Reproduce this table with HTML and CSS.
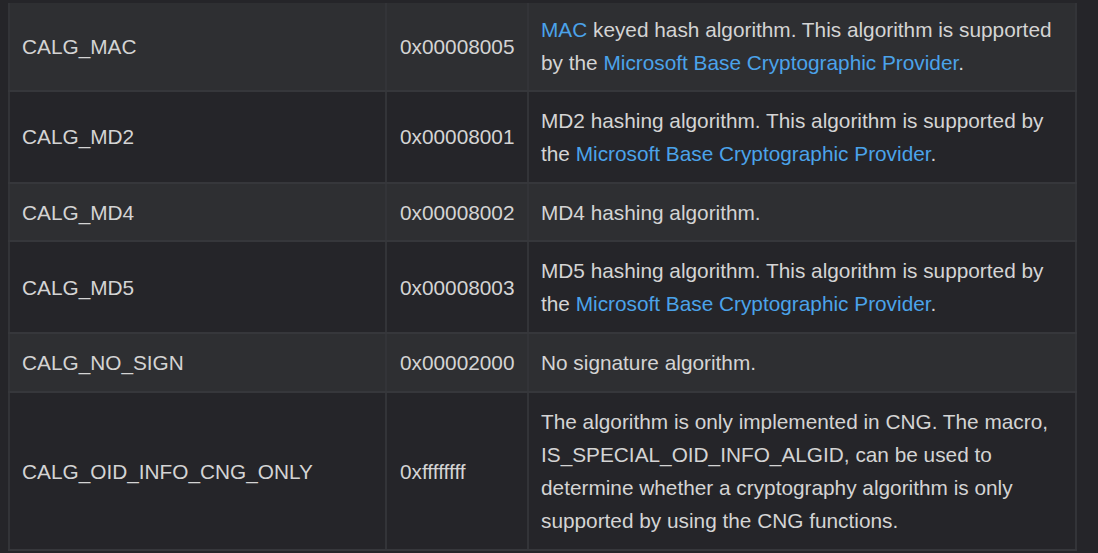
FILE: index.html
```html
<!DOCTYPE html>
<html lang="en">
<head>
<meta charset="utf-8">
<title>ALG_ID</title>
<link rel="stylesheet" href="styles.css">
</head>
<body>
<div class="wrap">
<table class="alg-table">
  <colgroup>
    <col class="c-name">
    <col class="c-value">
    <col class="c-desc">
  </colgroup>
  <tbody>
    <tr class="odd first">
      <td>CALG_MAC</td>
      <td class="val">0x00008005</td>
      <td><a href="#">MAC</a> keyed hash algorithm. This algorithm is supported by the <a href="#">Microsoft Base Cryptographic Provider</a>.</td>
    </tr>
    <tr class="even">
      <td>CALG_MD2</td>
      <td class="val">0x00008001</td>
      <td>MD2 hashing algorithm. This algorithm is supported by the <a href="#">Microsoft Base Cryptographic Provider</a>.</td>
    </tr>
    <tr class="odd">
      <td>CALG_MD4</td>
      <td class="val">0x00008002</td>
      <td>MD4 hashing algorithm.</td>
    </tr>
    <tr class="even">
      <td>CALG_MD5</td>
      <td class="val">0x00008003</td>
      <td>MD5 hashing algorithm. This algorithm is supported by the <a href="#">Microsoft Base Cryptographic Provider</a>.</td>
    </tr>
    <tr class="odd">
      <td>CALG_NO_SIGN</td>
      <td class="val">0x00002000</td>
      <td>No signature algorithm.</td>
    </tr>
    <tr class="even">
      <td>CALG_OID_INFO_CNG_ONLY</td>
      <td class="val">0xffffffff</td>
      <td>The algorithm is only implemented in CNG. The macro, IS_SPECIAL_OID_INFO_ALGID, can be used to determine whether a cryptography algorithm is only supported by using the CNG functions.</td>
    </tr>
  </tbody>
</table>
</div>
</body>
</html>
```

FILE: styles.css
```css
html, body {
  margin: 0;
  padding: 0;
  background: #252529;
}

body {
  font-family: "Liberation Sans", Arial, sans-serif;
  font-size: 20.8px;
  line-height: 1.6;
  color: #d4d4d4;
  overflow: hidden;
}

.wrap {
  padding: 0 0 0 8px;
}

.alg-table {
  border-collapse: collapse;
  table-layout: fixed;
  width: 1067px;
  border-top: 3px solid #252529;
}

.c-name { width: 377px; }
.c-value { width: 142px; }
.c-desc { width: 548px; }

.alg-table td {
  padding: 11.7px 12px;
  vertical-align: middle;
  border-left: 2px solid #333438;
  border-right: 2px solid #333438;
  border-bottom: 2px solid #36373b;
}

.alg-table tr.first td {
  padding-top: 10.2px;
  padding-bottom: 10.2px;
}

.alg-table td.val {
  padding-left: 13px;
}

.alg-table tr.odd td {
  background: #2e2f32;
}

.alg-table tr.even td {
  background: #252529;
}

.alg-table a {
  color: #4ba3ea;
  text-decoration: none;
}
```
